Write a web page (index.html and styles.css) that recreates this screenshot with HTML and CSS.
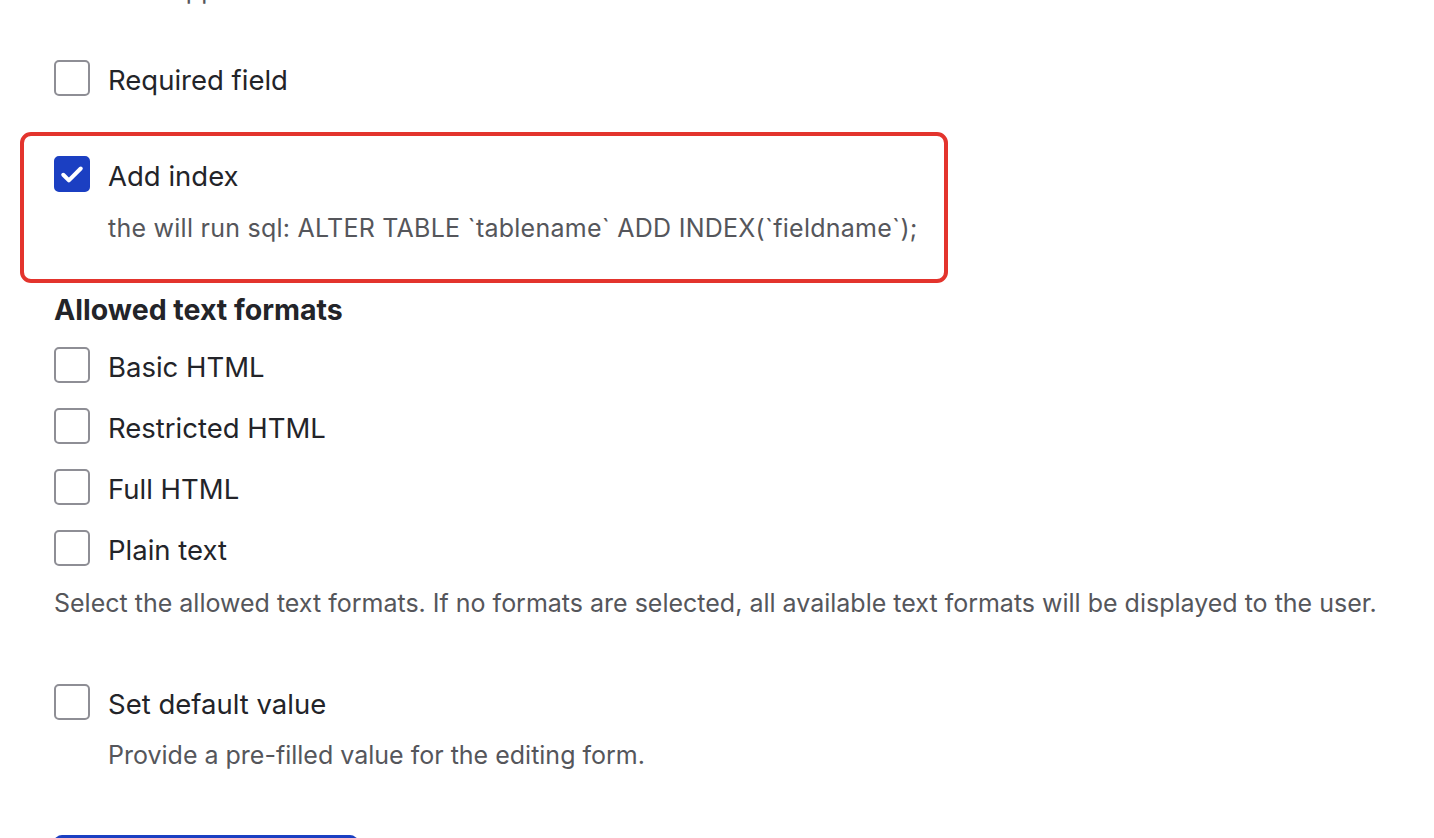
FILE: index.html
```html
<!DOCTYPE html>
<html lang="en">
<head>
<meta charset="UTF-8">
<meta name="viewport" content="width=device-width, initial-scale=1.0">
<title>Field settings</title>
<link rel="stylesheet" href="styles.css">
</head>
<body>

<form class="field-form">
    <div class="cut-desc">Field appears on the form</div>

    <div class="form-item required-item">
        <label class="check-row">
            <span class="checkbox"></span>
            <span class="check-label">Required field</span>
        </label>
    </div>

    <div class="form-item highlight">
        <label class="check-row">
            <span class="checkbox checked">
                <svg viewBox="0 0 24 24" width="30" height="30"><path d="M5 12.6l4.5 4.5L19 7.6" fill="none" stroke="#fff" stroke-width="3.2" stroke-linecap="round" stroke-linejoin="round"/></svg>
            </span>
            <span class="check-label">Add index</span>
        </label>
        <div class="description indented">the will run sql: ALTER TABLE `tablename` ADD INDEX(`fieldname`);</div>
    </div>

    <fieldset class="formats">
        <legend class="formats-title">Allowed text formats</legend>
        <label class="check-row">
            <span class="checkbox"></span>
            <span class="check-label">Basic HTML</span>
        </label>
        <label class="check-row">
            <span class="checkbox"></span>
            <span class="check-label">Restricted HTML</span>
        </label>
        <label class="check-row">
            <span class="checkbox"></span>
            <span class="check-label">Full HTML</span>
        </label>
        <label class="check-row">
            <span class="checkbox"></span>
            <span class="check-label">Plain text</span>
        </label>
        <div class="description">Select the allowed text formats. If no formats are selected, all available text formats will be displayed to the user.</div>
    </fieldset>

    <div class="form-item default-value">
        <label class="check-row">
            <span class="checkbox"></span>
            <span class="check-label">Set default value</span>
        </label>
        <div class="description indented">Provide a pre-filled value for the editing form.</div>
    </div>

    <button type="button" class="save-btn">Save settings</button>
</form>

</body>
</html>
```

FILE: styles.css
```css
body {
    margin: 0;
    background: #fff;
    font-family: Inter, "Noto Sans", sans-serif;
    color: #232429;
}

.field-form {
    display: flow-root;
    padding-left: 54px;
}

.cut-desc {
    margin-top: -28px;
    padding-left: 54px;
    height: 36px;
    line-height: 36px;
    font-size: 25px;
    color: #55565b;
}

.required-item {
    margin-top: 52px;
}

.check-row {
    display: flex;
    align-items: flex-start;
    height: 36px;
    gap: 18px;
}

.checkbox {
    box-sizing: border-box;
    width: 36px;
    height: 36px;
    border: 2px solid #8e8e95;
    border-radius: 5px;
    display: flex;
    align-items: center;
    justify-content: center;
    flex-shrink: 0;
}

.checkbox.checked {
    background: #1b3fc2;
    border-color: #1b3fc2;
}

.check-label {
    font-size: 27.5px;
    line-height: 40px;
}

.description {
    font-size: 25px;
    line-height: 36px;
    color: #55565b;
}

.description.indented {
    padding-left: 54px;
}

.highlight {
    margin: 36px 0 0 -34px;
    width: 860px;
    padding: 20px 30px 33px 30px;
    border: 4px solid #e3342d;
    border-radius: 11px;
}

.highlight .description {
    margin-top: 18px;
    letter-spacing: 0.25px;
    white-space: nowrap;
}

.formats {
    border: none;
    margin: 9px 0 0 0;
    padding: 0;
}

.formats-title {
    padding: 0;
    font-size: 28.5px;
    font-weight: 700;
    line-height: 36px;
    margin-bottom: 19px;
}

.formats .check-row + .check-row {
    margin-top: 25px;
}

.formats .description {
    margin-top: 19px;
}

.default-value {
    margin-top: 63px;
}

.default-value .description {
    margin-top: 17px;
}

.save-btn {
    margin-top: 62px;
    width: 304px;
    height: 60px;
    border: none;
    border-radius: 8px;
    background: #1b3fc2;
    color: #fff;
    font-family: inherit;
    font-size: 26px;
    font-weight: 700;
}
```
